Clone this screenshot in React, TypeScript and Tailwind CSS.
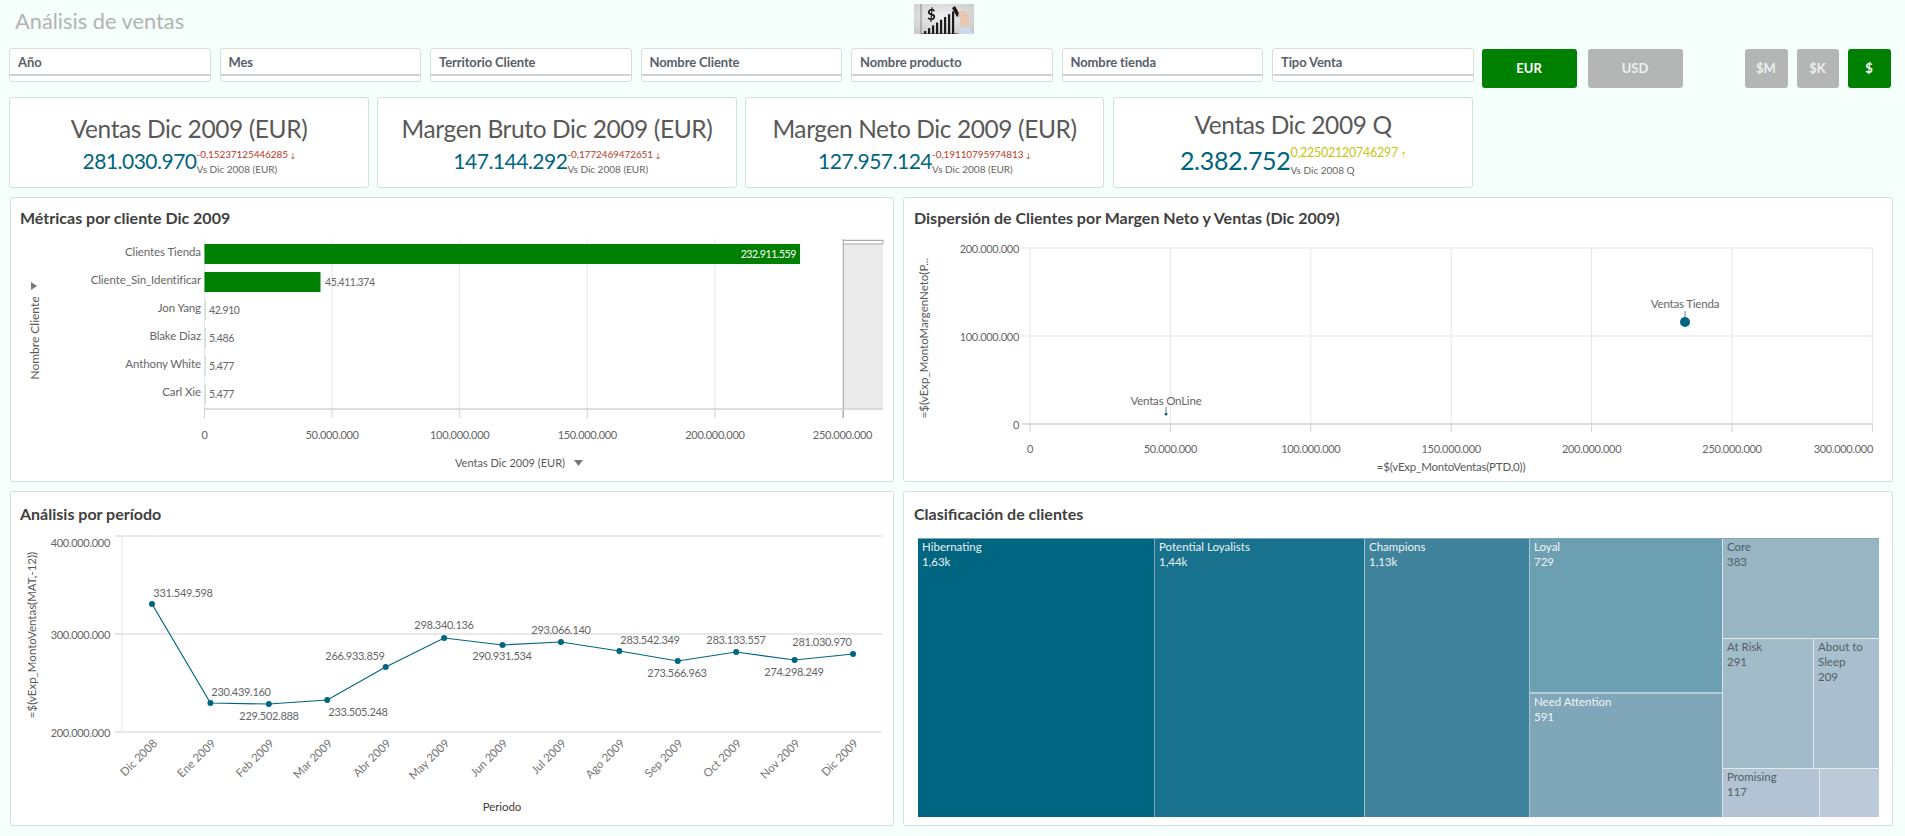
const grid = "#e6e6e6";
const axis = "#d2d2d2";
const label = "#666666";
const teal = "#006580";
const tight = { letterSpacing: "-0.3px" };

function Filter({ name }: { name: string }) {
  return (
    <div className="w-[201.5px] h-[34px] bg-white border border-[#d9dedc] rounded-[3px] flex flex-col">
      <div className="h-[27px] border-b-2 border-[#cfd2d2] flex items-center pl-[8px] pt-[2px] text-[13px] tracking-[-0.1px] font-bold text-[#58606a]">{name}</div>
    </div>
  );
}

function Btn({ text, on, w }: { text: string; on?: boolean; w: string }) {
  return (
    <div className={`${w} h-[39px] mt-px rounded-[3px] flex items-center justify-center text-[13px] font-bold ${on ? "bg-[#008000] text-white" : "bg-[#b3b6b4] text-[#eef0ef]"}`}>{text}</div>
  );
}

function Kpi({ title, value, delta, vs, w, last }: { title: string; value: string; delta: string; vs: string; w: string; last?: boolean }) {
  const arrow = last ? "↑" : "↓";
  return (
    <div className={`${w} h-[91px] bg-white border border-[#d5dfdc] rounded-[3px] flex flex-col items-center ${last ? "pt-[11px]" : "pt-[15px]"}`}>
      <div className={`text-[24.5px] tracking-[-0.4px] leading-[32px] text-[#595959] ${last ? "mb-[5px]" : ""}`}>{title}</div>
      <div className="flex items-start">
        <div className={last ? "text-[25px] tracking-[-0.3px] leading-[28px] text-[#006580]" : "text-[21px] tracking-[-0.5px] leading-[32px] text-[#006580]"}>{value}</div>
        <div className={`flex flex-col ${last ? "-mt-px" : "pt-[2px]"}`}>
          <div className={last ? "text-[12.5px] tracking-[-0.25px] leading-[16px] text-[#c9c40f]" : "text-[10px] tracking-[-0.1px] leading-[14px] text-[#b83a2a]"}>
            {delta} <span className="text-[7px]">{arrow}</span>
          </div>
          <div className={last ? "text-[10px] leading-[14px] mt-[1px] text-[#666666]" : "text-[10px] leading-[14px] text-[#666666]"}>{vs}</div>
        </div>
      </div>
    </div>
  );
}

function Panel({ title, w, h, px, pt, children }: { title: string; w: string; h: string; px: string; pt?: string; children: React.ReactNode }) {
  return (
    <div className={`${w} ${h} bg-white border border-[#d3e2de] rounded-[3px] flex flex-col`}>
      <div className={`h-[40px] flex items-center ${px} ${pt ?? ""} text-[16px] font-bold text-[#404040]`}>{title}</div>
      {children}
    </div>
  );
}

function BarChart() {
  const xs = [0, 1, 2, 3, 4, 5];
  const lab = ["0", "50.000.000", "100.000.000", "150.000.000", "200.000.000", "250.000.000"];
  const rows = [
    ["Clientes Tienda", 595.5, "232.911.559"],
    ["Cliente_Sin_Identificar", 116, "45.411.374"],
    ["Jon Yang", 1.5, "42.910"],
    ["Blake Diaz", 1.5, "5.486"],
    ["Anthony White", 1.5, "5.477"],
    ["Carl Xie", 1.5, "5.477"],
  ] as const;
  return (
    <svg width="882" height="243" viewBox="11 238 882 243" fontSize="11">
      {xs.map((i) => {
        const x = 204.5 + i * 127.6;
        return (
          <g key={i}>
            <line x1={x} x2={x} y1={239} y2={409} stroke={grid} />
            <line x1={x} x2={x} y1={409} y2={418} stroke={axis} />
            <text x={x} y={439} textAnchor="middle" fill={label} style={tight}>{lab[i]}</text>
          </g>
        );
      })}
      <rect x={843} y={239} width={40} height={170} fill="#ebebeb" />
      <rect x={843.5} y={240.5} width={39.5} height={3.5} fill="#ffffff" stroke="#a8a8a8" />
      <line x1={843.5} x2={843.5} y1={239} y2={418} stroke="#b5b5b5" />
      <line x1={204} x2={883} y1={409} y2={409} stroke={axis} strokeWidth="1.5" />
      {rows.map((r, i) => {
        const y = 244 + i * 28;
        return (
          <g key={r[0]}>
            <text x={201} y={y + 12} textAnchor="end" fontSize="11.5" letterSpacing="-0.1" fill={label}>{r[0]}</text>
            <rect x={204.5} y={y} width={r[1]} height={20} fill={i < 2 ? "#008000" : "#cfe5cf"} />
            {i === 0 ? (
              <text x={796} y={y + 14} textAnchor="end" fontSize="10.5" letterSpacing="-0.4" fill="#ffffff">{r[2]}</text>
            ) : (
              <text x={i === 1 ? 325 : 209} y={y + 14} fontSize="10.5" letterSpacing="-0.4" fill={label}>{r[2]}</text>
            )}
          </g>
        );
      })}
      <text x={510} y={467} textAnchor="middle" fill="#595959">Ventas Dic 2009 (EUR)</text>
      <polygon points="574,460 583,460 578.5,466" fill="#777777" />
      <polygon points="31,282 31,290 37,286" fill="#777777" />
      <text transform="translate(39 338) rotate(-90)" textAnchor="middle" fontSize="12" fill="#595959">Nombre Cliente</text>
    </svg>
  );
}

function Scatter() {
  const lab = ["0", "50.000.000", "100.000.000", "150.000.000", "200.000.000", "250.000.000", "300.000.000"];
  return (
    <svg width="988" height="243" viewBox="904 238 988 243" fontSize="11">
      {lab.map((t, i) => {
        const x = 1030 + i * 140.4;
        return (
          <g key={t}>
            <line x1={x} x2={x} y1={248} y2={424} stroke={grid} />
            <line x1={x} x2={x} y1={424} y2={432} stroke={axis} />
            <text x={i === 6 ? 1873 : x} y={453} textAnchor={i === 6 ? "end" : "middle"} fill={label} style={tight}>{t}</text>
          </g>
        );
      })}
      {[["200.000.000", 248], ["100.000.000", 336], ["0", 424]].map(([t, y]) => (
        <g key={t as string}>
          <line x1={1022} x2={1873} y1={y as number} y2={y as number} stroke={y === 424 ? axis : grid} strokeWidth={y === 424 ? 1.5 : 1.2} />
          <text x={1019} y={(y as number) + 5} textAnchor="end" fill={label} style={tight}>{t}</text>
        </g>
      ))}
      <text x={1685} y={308} textAnchor="middle" fontSize="11.5" letterSpacing="-0.2" fill={label}>Ventas Tienda</text>
      <line x1={1685} x2={1685} y1={311} y2={317} stroke="#777777" />
      <circle cx={1685} cy={322} r={5} fill={teal} />
      <text x={1166} y={405} textAnchor="middle" fontSize="11.5" letterSpacing="-0.2" fill={label}>Ventas OnLine</text>
      <line x1={1166} x2={1166} y1={407} y2={412} stroke="#777777" />
      <circle cx={1166} cy={414} r={1.5} fill={teal} />
      <text x={1451} y={471} textAnchor="middle" fontSize="11.5" letterSpacing="-0.2" fill="#595959">=$(vExp_MontoVentas(PTD,0))</text>
      <text transform="translate(928 338) rotate(-90)" textAnchor="middle" fontSize="11.5" fill="#595959">=$(vExp_MontoMargenNeto(P...</text>
    </svg>
  );
}

function LineChart() {
  const ys = [604, 703, 704, 700, 667, 638, 645, 642, 651, 661, 652, 660, 654];
  const cats = ["Dic 2008", "Ene 2009", "Feb 2009", "Mar 2009", "Abr 2009", "May 2009", "Jun 2009", "Jul 2009", "Ago 2009", "Sep 2009", "Oct 2009", "Nov 2009", "Dic 2009"];
  const px = (i: number) => 152 + i * 58.42;
  const labels: [string, number, number][] = [
    ["331.549.598", 183, 593], ["230.439.160", 241, 692], ["229.502.888", 269, 716],
    ["233.505.248", 358, 712], ["266.933.859", 355, 656], ["298.340.136", 444, 625],
    ["290.931.534", 502, 656], ["293.066.140", 561, 630], ["283.542.349", 650, 640],
    ["273.566.963", 677, 673], ["283.133.557", 736, 640], ["274.298.249", 794, 672],
    ["281.030.970", 822, 642],
  ];
  return (
    <svg width="882" height="293" viewBox="11 532 882 293" fontSize="11">
      <line x1={122} x2={122} y1={536} y2={732} stroke={grid} />
      {[["400.000.000", 536, 547], ["300.000.000", 634, 639], ["200.000.000", 732, 737]].map(([t, y, ty]) => (
        <g key={t as string}>
          <line x1={115} x2={882} y1={y as number} y2={y as number} stroke={axis} />
          <text x={110} y={ty as number} textAnchor="end" fill={label} style={tight}>{t}</text>
        </g>
      ))}
      <polyline points={ys.map((y, i) => `${px(i)},${y}`).join(" ")} fill="none" stroke={teal} strokeWidth="1.2" />
      {ys.map((y, i) => <circle key={i} cx={px(i)} cy={y} r={3} fill={teal} />)}
      {labels.map(([t, x, y]) => (
        <text key={t} x={x} y={y + 4} textAnchor="middle" fill={label} style={tight}>{t}</text>
      ))}
      {cats.map((c, i) => (
        <text key={i} transform={`translate(${px(i) + 6} 744) rotate(-45)`} textAnchor="end" fontSize="11.5" fill="#757575">{c}</text>
      ))}
      <text x={502} y={811} textAnchor="middle" fontSize="11.5" letterSpacing="-0.1" fill="#404040">Periodo</text>
      <text transform="translate(36 635) rotate(-90)" textAnchor="middle" fontSize="11.5" fill="#595959">=$(vExp_MontoVentas(MAT,-12))</text>
    </svg>
  );
}

function Cell({ name, v, cls }: { name: string; v?: string; cls: string }) {
  return (
    <div className={`${cls} pl-[4px] text-[11.5px] leading-[15px] overflow-hidden`}>
      <div>{name}</div>
      {v && <div>{v}</div>}
    </div>
  );
}

function Treemap() {
  return (
    <div className="ml-[14px] mt-[6px] w-[961px] h-[279px] flex border-t border-[#7fa6b9]">
      <Cell name="Hibernating" v="1,63k" cls="w-[237px] h-full bg-[#006580] text-[#e8f2f5] border-r border-[#7fa6b9]" />
      <Cell name="Potential Loyalists" v="1,44k" cls="w-[210px] h-full bg-[#19728d] text-[#e8f2f5] border-r border-[#9cc0cc]" />
      <Cell name="Champions" v="1,13k" cls="w-[165px] h-full bg-[#3f829b] text-[#eef5f7] border-r border-[#a9c8d2]" />
      <div className="w-[192px] h-full flex flex-col">
        <Cell name="Loyal" v="729" cls="h-[153px] bg-[#6d9fb3] text-[#f0f5f7]" />
        <div className="h-[2px] bg-[#b5cdd8]" />
        <Cell name="Need Attention" v="591" cls="flex-1 bg-[#7fa6b9] text-[#f0f5f7]" />
      </div>
      <div className="w-[157px] h-full flex flex-col border-l border-[#d8e4ea]">
        <Cell name="Core" v="383" cls="h-[99px] bg-[#97b5c3] text-[#4f5f68]" />
        <div className="h-[130px] flex border-t border-[#e2eaee]">
          <Cell name="At Risk" v="291" cls="w-[91px] bg-[#a2bbc9] text-[#4f5f68] border-r border-[#e2eaee]" />
          <Cell name="About to Sleep" v="209" cls="flex-1 bg-[#aabfcd] text-[#4f5f68]" />
        </div>
        <div className="flex-1 flex border-t border-[#e2eaee]">
          <Cell name="Promising" v="117" cls="w-[97px] bg-[#b3c3d3] text-[#4f5f68] border-r border-[#e2eaee]" />
          <div className="flex-1 bg-[#bcc9d8]" />
        </div>
      </div>
    </div>
  );
}

function Logo() {
  const bars = [10, 14, 18, 22, 26, 30, 34, 38];
  return (
    <svg width="60" height="30" viewBox="0 0 60 30" className="blur-[0.4px]">
      <defs>
        <radialGradient id="logoBg" cx="0.45" cy="0.4" r="0.8">
          <stop offset="0" stopColor="#f2f2f2" />
          <stop offset="1" stopColor="#c4c4c4" />
        </radialGradient>
      </defs>
      <rect width="60" height="30" fill="url(#logoBg)" />
      <line x1="7" x2="7" y1="0" y2="29" stroke="#777777" strokeWidth="0.8" />
      <line x1="7" x2="44" y1="29.5" y2="29.5" stroke="#666666" strokeWidth="0.8" />
      <text x="13" y="16" fontSize="15" fontWeight="700" fill="#111111">$</text>
      {bars.map((x, i) => <rect key={x} x={x} y={27 - i * 2.8} width="2.2" height={30 - (27 - i * 2.8)} fill="#1c1c1c" />)}
      <path d="M38 4 L41 2 L46 11 L43 13 Z" fill="#1a1a1a" />
      <path d="M44 11 C45 7 50 4 53 9 C56 13 55 19 55 23 L46 23 C47 19 47 15 44 11 Z" fill="#e8c6b0" />
      <path d="M45 23 L55 23 L60 30 L46 30 Z" fill="#cbd9ee" />
    </svg>
  );
}

export default function App() {
  return (
    <div className="w-[1905px] h-[836px] bg-[#f5fffc] overflow-hidden font-['Lato',sans-serif]">
      <div className="h-[48px] flex pt-[4px]">
        <div className="w-[914px] pl-[15px] text-[21.8px] leading-[34px] text-[#b3b3b3]">Análisis de ventas</div>
        <Logo />
      </div>
      <div className="h-[49px] flex items-start pl-[9px] gap-[9px]">
        {["Año", "Mes", "Territorio Cliente", "Nombre Cliente", "Nombre producto", "Nombre tienda", "Tipo Venta"].map((f) => <Filter key={f} name={f} />)}
        <Btn text="EUR" on w="w-[95px] -ml-px" />
        <Btn text="USD" w="w-[95px] ml-[2px]" />
        <Btn text="$M" w="w-[43px] ml-[53px]" />
        <Btn text="$K" w="w-[42px]" />
        <Btn text="$" on w="w-[43px]" />
      </div>
      <div className="flex pl-[9px] gap-[9px]">
        <Kpi w="w-[360px]" title="Ventas Dic 2009 (EUR)" value="281.030.970" delta="-0,15237125446285" vs="Vs Dic 2008 (EUR)" />
        <Kpi w="w-[360px] -ml-px" title="Margen Bruto Dic 2009 (EUR)" value="147.144.292" delta="-0,1772469472651" vs="Vs Dic 2008 (EUR)" />
        <Kpi w="w-[359px] -ml-px" title="Margen Neto Dic 2009 (EUR)" value="127.957.124" delta="-0,19110795974813" vs="Vs Dic 2008 (EUR)" />
        <Kpi w="w-[360px]" last title="Ventas Dic 2009 Q" value="2.382.752" delta="0,22502120746297" vs="Vs Dic 2008 Q" />
      </div>
      <div className="flex pl-[10px] gap-[9px] mt-[9px]">
        <Panel w="w-[884px]" h="h-[285px]" px="pl-[9px]" title="Métricas por cliente Dic 2009"><BarChart /></Panel>
        <Panel w="w-[990px]" h="h-[285px]" px="pl-[10px]" title="Dispersión de Clientes por Margen Neto y Ventas (Dic 2009)"><Scatter /></Panel>
      </div>
      <div className="flex pl-[10px] gap-[9px] mt-[9px]">
        <Panel w="w-[884px]" h="h-[335px]" px="pl-[9px]" pt="pt-1" title="Análisis por período"><LineChart /></Panel>
        <Panel w="w-[990px]" h="h-[335px]" px="pl-[10px]" pt="pt-1" title="Clasificación de clientes"><Treemap /></Panel>
      </div>
    </div>
  );
}
